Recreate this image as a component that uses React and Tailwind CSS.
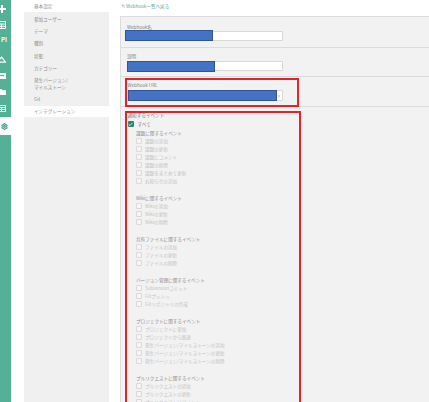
import React from "react";
import { Settings, Check, X } from "lucide-react";

const NAV = ["参加ユーザー", "テーマ", "種別", "状態", "カテゴリー"];

const GROUPS = [
  { title: "課題に関するイベント", items: ["課題の追加", "課題の更新", "課題にコメント", "課題の削除", "課題をまとめて更新", "お知らせの追加"] },
  { title: "Wikiに関するイベント", items: ["Wikiの追加", "Wikiの更新", "Wikiの削除"] },
  { title: "共有ファイルに関するイベント", items: ["ファイルの追加", "ファイルの更新", "ファイルの削除"] },
  { title: "バージョン管理に関するイベント", items: ["Subversionコミット", "Gitプッシュ", "Gitリポジトリの作成"] },
  { title: "プロジェクトに関するイベント", items: ["プロジェクトに参加", "プロジェクトから脱退", "発生バージョン/マイルストーンの追加", "発生バージョン/マイルストーンの更新", "発生バージョン/マイルストーンの削除"] },
  { title: "プルリクエストに関するイベント", items: ["プルリクエストの追加", "プルリクエストの更新", "プルリクエストにコメント"] },
];

const FONT = "font-['Noto_Sans_CJK_JP','Noto_Sans',sans-serif]";

function RailIcon({ className, children }) {
  return (
    <svg viewBox="0 0 8 8" className={`-ml-[2px] h-[8px] w-[8px] shrink-0 ${className}`} fill="none" stroke="currentColor">
      {children}
    </svg>
  );
}

function EventRow({ label }) {
  return (
    <div className="flex h-[8px] items-center gap-[3px]">
      <span className="h-[6px] w-[6px] shrink-0 rounded-[1px] border border-[#dadada] bg-[#f5f5f5]" />
      <span className="whitespace-nowrap text-[4.6px] leading-[6px] text-[#c2c2c2]">{label}</span>
    </div>
  );
}

export default function App() {
  return (
    <div className={`${FONT} flex h-[402px] w-[429px] overflow-hidden bg-white`}>
      <aside className="flex h-[402px] w-[11px] shrink-0 flex-col overflow-hidden bg-[#55b195] pt-[5px] text-white">
        <RailIcon>
          <path d="M4 0v8M0 4h8" strokeWidth="2" />
        </RailIcon>
        <RailIcon className="mt-[8px]">
          <path d="M0 .5h7.5v7H0zM0 3h8M0 5.3h8M3.5 3v4.5" strokeWidth="1" />
        </RailIcon>
        <span className="mt-[7px] h-[8px] whitespace-nowrap pl-[1px] text-[6px] font-bold leading-[8px]">PI</span>
        <RailIcon className="mt-[11px]">
          <path d="M0 7.2h7.5L3.6 2.2 1 5" strokeWidth="1.2" />
        </RailIcon>
        <RailIcon className="mt-[9px]">
          <path d="M0 1h8v6H0z" fill="currentColor" stroke="none" />
          <path d="M2 3.5h4" stroke="#55b195" strokeWidth="1.2" />
        </RailIcon>
        <RailIcon className="mt-[8px]">
          <path d="M0 1h3.5l1 1.2H8V7H0z" fill="currentColor" stroke="none" />
        </RailIcon>
        <RailIcon className="mt-[9px]">
          <path d="M0 .5h7.5v6H0zM0 2.5h8M0 4.5h8M3.5 2.5v4" strokeWidth="1" />
        </RailIcon>
        <div className="mt-[4px] flex h-[18px] w-[11px] shrink-0 items-center bg-white pl-[0.5px] text-[#3f9f84]">
          <Settings size={7} strokeWidth={3.5} />
        </div>
      </aside>

      <nav className="ml-[13px] h-[402px] w-[85px] shrink-0 bg-[#f0f0f0] text-[4.6px] leading-[6px] text-[#8c8c8c]">
        <div className="flex h-[12px] items-center bg-white pl-[10px]">基本設定</div>
        <div className="mt-[1px]">
          {NAV.map((label) => (
            <div key={label} className="flex h-[12.2px] items-center pl-[10px]">{label}</div>
          ))}
        </div>
        <div className="mt-[3px] pl-[10px] leading-[7px]">発生バージョン/<br />マイルストーン</div>
        <div className="mt-[2px] flex h-[12px] items-center pl-[10px]">Git</div>
        <div className="mt-[1px] flex h-[11px] items-center bg-white pl-[10px]">インテグレーション</div>
      </nav>

      <main className="min-w-0 flex-1 pl-[11px]">
        <p className="h-[16px] whitespace-nowrap pl-[1px] pt-[3px] text-[4.6px] leading-[6px] text-[#6aa594]">↰ Webhook一覧へ戻る</p>
        <div className="h-[386px] border-l border-t border-[#dcdcdc] bg-[#f2f2f2]">
          <div className="h-[31px] border-b border-[#dcdcdc] pl-[6px] pt-[7px]">
            <p className="text-[4.6px] leading-[6px] text-[#808080]">Webhook名</p>
            <div className="relative mt-[1px] h-[10px] w-[156px] rounded-[1px] border border-[#d8d8d8] bg-white">
              <div className="absolute -left-[3px] -top-[2px] h-[11px] w-[88px] border border-[#2f5597] bg-[#4472c4]" />
            </div>
          </div>
          <div className="h-[29px] border-b border-[#dcdcdc] pl-[6px] pt-[5px]">
            <p className="text-[4.6px] leading-[6px] text-[#808080]">説明</p>
            <div className="relative mt-[2px] h-[10px] w-[156px] rounded-[1px] border border-[#d8d8d8] bg-white">
              <div className="absolute -left-[1px] -top-[1px] h-[10.5px] w-[88px] border border-[#2f5597] bg-[#4472c4]" />
            </div>
          </div>
          <div className="h-[30px] border-b border-[#dcdcdc] pt-[1px]">
            <div className="ml-[4px] h-[29px] w-[174px] border-2 border-[#e0242c] pt-[2px]">
              <p className="pl-[0.5px] text-[4.6px] leading-[6px] text-[#808080]">Webhook URL</p>
              <div className="relative mt-[2px] h-[11px] w-[156px] rounded-[1px] border border-[#d8d8d8] bg-white">
                <div className="absolute left-0 -top-[1px] h-[11px] w-[149px] border border-[#2f5597] bg-[#4472c4]" />
                <X size={4} className="absolute right-[1px] top-[2.5px] text-[#999]" />
              </div>
            </div>
          </div>
          <div className="ml-[4px] mt-[4px] h-[300px] w-[176px] border-2 border-[#e0242c]">
            <p className="pl-[0.5px] text-[4.6px] leading-[5px] text-[#808080]">通知するイベント</p>
            <div className="mt-[2px] flex h-[8px] items-center gap-[4px] pl-[0.5px]">
              <span className="flex h-[6px] w-[6px] items-center justify-center rounded-[1px] bg-[#1f8a70] text-white">
                <Check size={5} strokeWidth={4} />
              </span>
              <span className="text-[4.6px] leading-[6px] text-[#808080]">すべて</span>
            </div>
            <div className="ml-[9px] mt-[1px]">
              {GROUPS.map((group) => (
                <section key={group.title} className="mb-[9px]">
                  <p className="h-[8px] whitespace-nowrap text-[4.6px] leading-[8px] text-[#8c8c8c]">{group.title}</p>
                  {group.items.map((item) => <EventRow key={item} label={item} />)}
                </section>
              ))}
            </div>
          </div>
        </div>
      </main>
    </div>
  );
}
